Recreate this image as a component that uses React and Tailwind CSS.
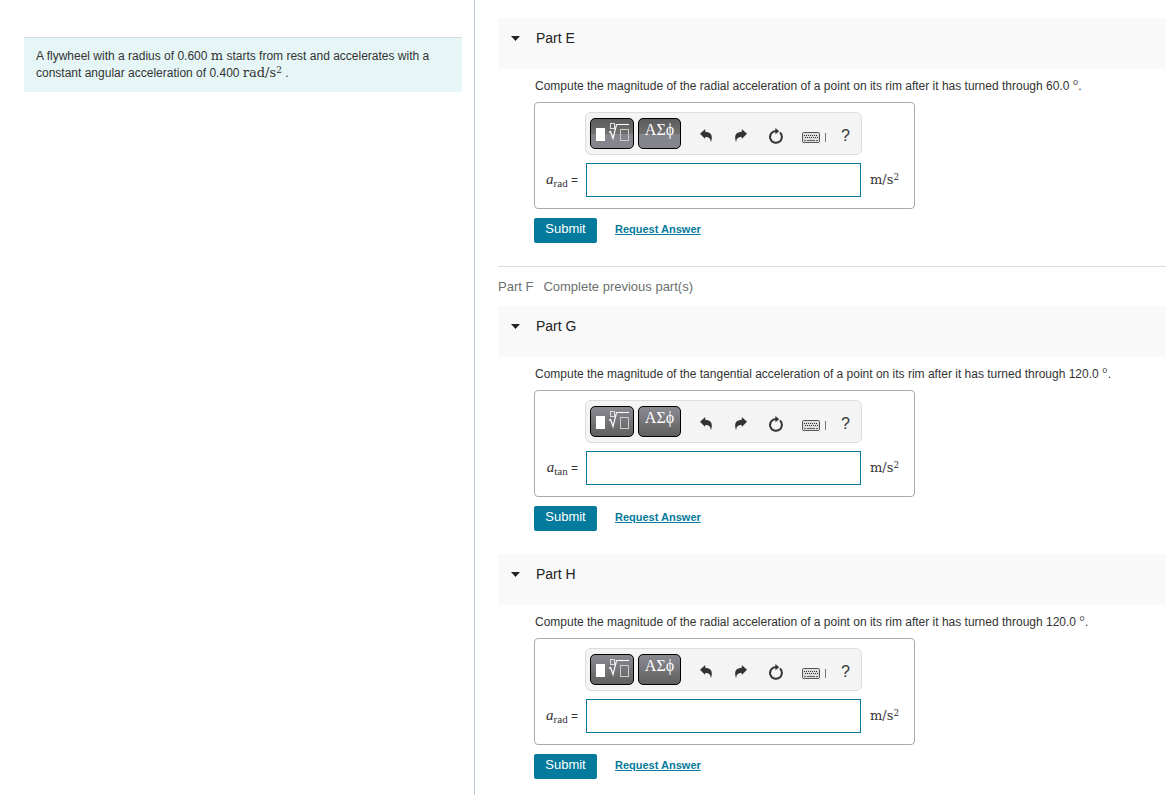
import { useRef, useState } from "react";

const parts = {
  e: { title: "Part E", kind: "radial", angle: "60.0", sub: "rad" },
  g: { title: "Part G", kind: "tangential", angle: "120.0", sub: "tan" },
  h: { title: "Part H", kind: "radial", angle: "120.0", sub: "rad" },
};

/* icons */
const TemplateIcon = () => (
  <svg className="w-[34px] h-[20px]" viewBox="0 0 34 20" fill="none" stroke="#fff">
    <rect x="1" y="6" width="9" height="13" fill="#fff" stroke="none" />
    <rect x="15.5" y="1.5" width="4" height="5" stroke="#ddd" />
    <path d="M14 10.5l1.5-1 2.5 7L21.5 2.5H34" strokeWidth="1.2" />
    <rect x="25.5" y="7.5" width="8" height="11" stroke="#ccc" />
  </svg>
);

const UndoIcon = () => (
  <svg className="w-[12px] h-[13px]" viewBox="0 0 12 13" fill="#333">
    <path d="M0 4.8L5.2 0v2.8c4 .1 6.6 2.2 6.6 5.4 0 2-.3 3.8-1 4.8-.2-3.3-1.6-5-5.6-5v2z" />
  </svg>
);

const RedoIcon = () => (
  <svg className="w-[12px] h-[13px]" viewBox="0 0 12 13" fill="#333">
    <path d="M12 4.8L6.8 0v2.8C2.8 2.9.2 5 .2 8.2c0 2 .3 3.8 1 4.8.2-3.3 1.6-5 5.6-5v2z" />
  </svg>
);

const ResetIcon = () => (
  <svg className="w-[14px] h-[16px]" viewBox="0 0 14 16" fill="none">
    <path d="M11 4.6A5.9 5.9 0 1 1 7 3" stroke="#333" strokeWidth="2" />
    <path d="M6.4 0l3.8 3.2-3.8 3z" fill="#333" />
  </svg>
);

const KeyboardIcon = () => (
  <svg className="w-[24px] h-[11px]" viewBox="0 0 24 11" fill="none">
    <rect x=".5" y=".5" width="17" height="10" rx="1" fill="#ddd" stroke="#555" />
    <path d="M2 3.5h14M3 5.5h13" stroke="#333" strokeDasharray="1 1" />
    <path d="M2 8.5h2M5 8.5h8M14 8.5h2" stroke="#666" />
    <path d="M23.5 1v9" stroke="#777" />
  </svg>
);

function Caret() {
  return (
    <svg className="w-[9px] h-[5px]" viewBox="0 0 9 5" fill="#222">
      <path d="M0 0h9L4.5 5z" />
    </svg>
  );
}

function Unit({ name, squared }) {
  return (
    <span className="font-['DejaVu_Serif',serif] text-[13px] leading-none whitespace-nowrap">
      {name}
      {squared && <sup className="text-[9px]">2</sup>}
    </span>
  );
}

function ToolButton({ label, onClick, children }) {
  return (
    <button type="button" aria-label={label} onClick={onClick} className="w-[35px] pt-1 flex items-center justify-center">
      {children}
    </button>
  );
}

function Part({ id, title, kind, angle, sub }) {
  const [open, setOpen] = useState(true);
  const [value, setValue] = useState("");
  const history = useRef([]);
  const future = useRef([]);

  const change = (next) => {
    history.current.push(value);
    future.current = [];
    setValue(next);
  };

  const undo = () => {
    if (!history.current.length) return;
    future.current.push(value);
    setValue(history.current.pop());
  };

  const redo = () => {
    if (!future.current.length) return;
    history.current.push(value);
    setValue(future.current.pop());
  };

  const darkButton =
    "h-[31px] rounded-[5px] border border-black bg-linear-to-b text-white flex justify-center " +
    (id === "e" ? "from-[#5c5c5c] from-0% via-[#707070] via-50% to-[#85858d] to-50%" : "from-[#8a8a92] to-[#606060]");

  return (
    <section>
      <button
        type="button"
        aria-expanded={open}
        onClick={() => setOpen(!open)}
        className="w-full h-[51px] pt-[10px] pl-[13px] flex items-start bg-[#f9f9f9] text-sm text-[#222]"
      >
        <span className="w-[25px] h-5 flex items-center">
          <Caret />
        </span>
        <span>{title}</span>
      </button>

      {open && (
        <form className="pl-9 pb-[23px]" onSubmit={(e) => e.preventDefault()}>
          <p className="mt-2 mb-[7px] pl-px text-xs leading-[18px]">
            Compute the magnitude of the {kind} acceleration of a point on its rim after it has turned through {angle}{" "}
            <span className="font-['Liberation_Serif',serif] text-sm leading-none">°</span>.
          </p>

          <div className="w-[381px] h-[107px] pt-[9px] border border-[#aaa] rounded grid grid-cols-[50px_277px_auto] content-start gap-y-2">
            {/* Equation toolbar */}
            <div className="col-start-2 h-[43px] pl-1 py-[5px] flex border border-[#ddd] rounded-md bg-[#f4f4f4]">
              <button type="button" aria-label="Templates" className={`w-[44px] pt-[3px] mr-1 ${darkButton}`}>
                <TemplateIcon />
              </button>
              <button
                type="button"
                className={`w-[43px] mr-[7px] pt-px font-['Liberation_Serif','DejaVu_Serif',serif] text-base leading-5 ${darkButton}`}
              >
                ΑΣϕ
              </button>
              <ToolButton label="Undo" onClick={undo}><UndoIcon /></ToolButton>
              <ToolButton label="Redo" onClick={redo}><RedoIcon /></ToolButton>
              <ToolButton label="Reset" onClick={() => change("")}><ResetIcon /></ToolButton>
              <button type="button" aria-label="Keyboard shortcuts" className="w-[35px] pt-2 pl-[9px] flex items-center">
                <KeyboardIcon />
              </button>
              <button type="button" className="w-[33px] pt-1 pl-0.5 text-base leading-5">?</button>
            </div>

            {/* Answer row */}
            <label htmlFor={`answer-${id}`} className="col-start-1 self-center pr-[7px] text-right text-xs whitespace-nowrap">
              <span className="font-['Liberation_Serif',serif] text-[15px] leading-none">
                <i>a</i>
                <sub className="text-[11px]">{sub}</sub>
              </span>{" "}
              =
            </label>
            <input
              id={`answer-${id}`}
              type="text"
              autoComplete="off"
              value={value}
              onChange={(e) => change(e.target.value)}
              className="h-[34px] mx-px px-2 border border-[#047a9c] bg-white text-sm outline-none"
            />
            <span className="pl-2 self-center text-[13px] leading-4">
              <Unit name="m/s" squared />
            </span>
          </div>

          <div className="mt-[9px] flex items-center">
            <button type="submit" className="w-[63px] h-[25px] pb-[3px] rounded-xs bg-[#047a9c] text-white text-[13px] leading-5">
              Submit
            </button>
            <a href="#request" className="ml-[18px] pb-1 text-[11px] leading-4 font-bold text-[#047a9c] underline">
              Request Answer
            </a>
          </div>
        </form>
      )}
    </section>
  );
}

export default function App() {
  return (
    <div className="min-h-screen grid grid-cols-[475fr_691fr] bg-white font-['Liberation_Sans',Arial,sans-serif] text-[#333]">
      <aside className="pt-[37px] pl-6 pr-3 border-r border-[#b9c8dc]">
        <p className="px-3 py-[10px] border-t border-[#d5dfe0] bg-[#e6f6f7] text-xs leading-[17px]">
          A flywheel with a radius of 0.600 <Unit name="m" /> starts from rest and accelerates with a constant angular
          acceleration of 0.400 <Unit name="rad/s" squared /> .
        </p>
      </aside>

      <main className="pt-[18px] pl-[23px]">
        <Part id="e" {...parts.e} />
        <div className="h-[40px] pt-[10px] border-t border-[#ddd] flex gap-[10px] text-[13px] leading-5 text-[#6a7070]">
          <span className="font-medium">Part F</span>
          <span>Complete previous part(s)</span>
        </div>
        <Part id="g" {...parts.g} />
        <Part id="h" {...parts.h} />
      </main>
    </div>
  );
}
